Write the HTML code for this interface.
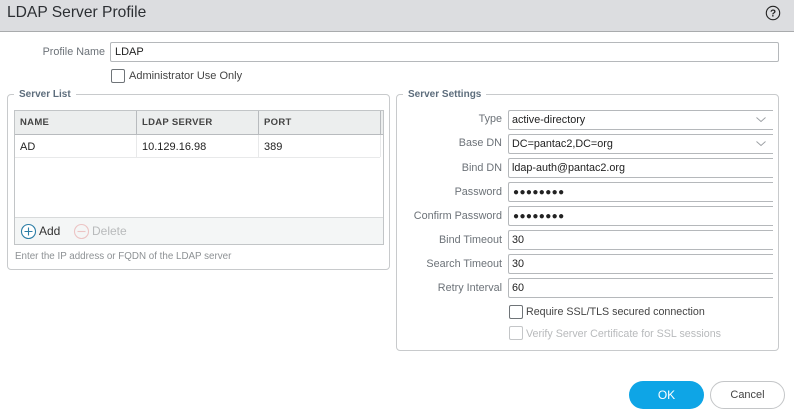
<!DOCTYPE html>
<html><head><meta charset="utf-8">
<style>
html,body{margin:0;padding:0;background:#fff;}
#p{position:relative;width:794px;height:416px;overflow:hidden;background:#fff;font-family:"Liberation Sans",sans-serif;font-size:11px;color:#222;}
#p div,#p span.a{position:absolute;box-sizing:border-box;white-space:nowrap;}
.l{text-align:right;color:#6c7278;height:14px;line-height:14px;font-size:10.8px;}
.i{left:508px;height:20px;border:1px solid #b5b8bb;border-right:0;border-radius:2px 0 0 2px;padding-left:3px;line-height:19px;color:#222;font-size:10.8px;}
.h{top:111px;height:23px;line-height:24px;font-weight:bold;font-size:9.5px;color:#444;letter-spacing:.3px;}
.d{font-size:10px;letter-spacing:.4px;padding-left:4px;}
.leg{background:#fff;font-weight:bold;font-size:10px;color:#5d6d7c;padding:0 5px;height:14px;line-height:14px;}
.s{width:1px;background:#b8bbbe;}
</style></head><body>
<div id="p">
<div style="left:0;top:0;width:794px;height:32px;background:#dcdde0;border-bottom:1px solid #a9abad;"></div>
<div style="left:7px;top:3px;font-size:15.6px;line-height:19px;color:#2c2f33;">LDAP Server Profile</div>
<svg style="position:absolute;left:765px;top:5px" width="16" height="16" viewBox="0 0 16 16"><circle cx="8" cy="8" r="6.7" fill="none" stroke="#222" stroke-width="1.1"/><text x="8" y="11.5" text-anchor="middle" font-family="Liberation Sans" font-size="10" font-weight="bold" fill="#222">?</text></svg>

<div class="l" style="left:0;width:105px;top:45px;">Profile Name</div>
<div style="left:110px;top:42px;width:669px;height:20px;border:1px solid #b5b8bb;border-radius:2px;padding-left:4px;line-height:19px;">LDAP</div>
<div style="left:111px;top:69px;width:14px;height:14px;border:1px solid #6f7478;border-radius:2px;"></div>
<div style="left:129px;top:69px;line-height:14px;color:#444;">Administrator Use Only</div>

<div style="left:7px;top:94px;width:383px;height:176px;border:1px solid #c8cacc;border-radius:4px;"></div>
<div class="leg" style="left:14px;top:88px;">Server List</div>

<div style="left:14px;top:110px;width:370px;height:135px;border:1px solid #c2c5c7;"></div>
<div style="left:15px;top:111px;width:368px;height:24px;background:#eceeee;border-bottom:1px solid #b8bbbe;"></div>
<div class="s" style="left:136px;top:111px;height:24px;"></div>
<div class="s" style="left:258px;top:111px;height:24px;"></div>
<div class="s" style="left:380px;top:111px;height:24px;"></div>
<div class="h" style="left:20px;">NAME</div>
<div class="h" style="left:142px;">LDAP SERVER</div>
<div class="h" style="left:264px;">PORT</div>
<div style="left:15px;top:157px;width:365px;height:1px;background:#e8e9ea;"></div>
<div style="left:136px;top:135px;width:1px;height:22px;background:#e8e9ea;"></div>
<div style="left:258px;top:135px;width:1px;height:22px;background:#e8e9ea;"></div>
<div style="left:380px;top:135px;width:1px;height:22px;background:#e8e9ea;"></div>
<div style="left:20px;top:140px;line-height:14px;">AD</div>
<div style="left:142px;top:140px;line-height:14px;">10.129.16.98</div>
<div style="left:264px;top:140px;line-height:14px;">389</div>
<div style="left:15px;top:217px;width:368px;height:27px;background:#f4f6f6;border-top:1px solid #d8dadb;"></div>
<svg style="position:absolute;left:20px;top:223px" width="17" height="17" viewBox="0 0 17 17"><circle cx="8.5" cy="8.5" r="7" fill="#fff" stroke="#2d7ea6" stroke-width="1.1"/><path d="M8.5 4.5v8M4.5 8.5h8" stroke="#2d7ea6" stroke-width="1.1" fill="none"/></svg>
<div style="left:39px;top:224px;font-size:12px;line-height:15px;color:#333;">Add</div>
<svg style="position:absolute;left:73px;top:223px" width="17" height="17" viewBox="0 0 17 17"><circle cx="8.5" cy="8.5" r="7" fill="none" stroke="#ecc4c4" stroke-width="1.1"/><path d="M4.5 8.5h8" stroke="#ecc4c4" stroke-width="1.1" fill="none"/></svg>
<div style="left:92px;top:224px;font-size:12px;line-height:15px;color:#b8babb;">Delete</div>
<div style="left:15px;top:250px;font-size:9.8px;line-height:14px;color:#8d9194;">Enter the IP address or FQDN of the LDAP server</div>

<div style="left:396px;top:94px;width:383px;height:257px;border:1px solid #c8cacc;border-radius:4px;"></div>
<div class="leg" style="left:403px;top:88px;">Server Settings</div>

<div class="l" style="left:396px;width:106px;top:112px;">Type</div>
<div class="i" style="top:110px;width:265px;">active-directory</div>
<div class="l" style="left:396px;width:106px;top:136px;">Base DN</div>
<div class="i" style="top:134px;width:265px;">DC=pantac2,DC=org</div>
<svg style="position:absolute;left:755px;top:116px" width="12" height="8" viewBox="0 0 12 8"><path d="M1.5 1.5l4.5 4 4.5-4" fill="none" stroke="#9a9ea2" stroke-width=".9"/></svg>
<svg style="position:absolute;left:755px;top:140px" width="12" height="8" viewBox="0 0 12 8"><path d="M1.5 1.5l4.5 4 4.5-4" fill="none" stroke="#9a9ea2" stroke-width=".9"/></svg>
<div class="l" style="left:396px;width:106px;top:161px;">Bind DN</div>
<div class="i" style="top:158px;width:265px;">ldap-auth@pantac2.org</div>
<div class="l" style="left:396px;width:106px;top:185px;">Password</div>
<div class="i d" style="top:182px;width:265px;">●●●●●●●●</div>
<div class="l" style="left:396px;width:106px;top:209px;">Confirm Password</div>
<div class="i d" style="top:206px;width:265px;">●●●●●●●●</div>
<div class="l" style="left:396px;width:106px;top:233px;">Bind Timeout</div>
<div class="i" style="top:230px;width:265px;">30</div>
<div class="l" style="left:396px;width:106px;top:257px;">Search Timeout</div>
<div class="i" style="top:254px;width:265px;">30</div>
<div class="l" style="left:396px;width:106px;top:281px;">Retry Interval</div>
<div class="i" style="top:278px;width:265px;">60</div>

<div style="left:509px;top:305px;width:14px;height:14px;border:1px solid #6f7478;border-radius:2px;"></div>
<div style="left:526px;top:305px;line-height:14px;color:#444;font-size:10.7px;">Require SSL/TLS secured connection</div>
<div style="left:509px;top:326px;width:14px;height:14px;border:1px solid #c4c6c8;border-radius:2px;"></div>
<div style="left:526px;top:327px;line-height:14px;color:#b8babc;font-size:10.7px;">Verify Server Certificate for SSL sessions</div>

<div style="left:629px;top:381px;width:75px;height:28px;border-radius:14px;background:#0ea5e6;color:#fff;font-size:12px;line-height:28px;text-align:center;">OK</div>
<div style="left:710px;top:381px;width:75px;height:28px;border-radius:14px;border:1px solid #c4c6c8;background:#fff;color:#444;font-size:11px;line-height:26px;text-align:center;">Cancel</div>
</div>
</body></html>
